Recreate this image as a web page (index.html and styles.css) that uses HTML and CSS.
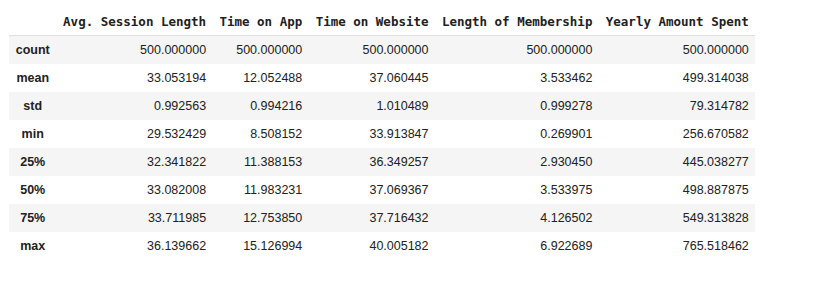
FILE: index.html
```html
<!DOCTYPE html>
<html lang="en">
<head>
    <meta charset="UTF-8">
    <title>describe()</title>
    <link rel="stylesheet" href="styles.css">
</head>
<body>
    <table class="dataframe">
        <thead>
            <tr>
                <th></th>
                <th>Avg. Session Length</th>
                <th>Time on App</th>
                <th>Time on Website</th>
                <th>Length of Membership</th>
                <th>Yearly Amount Spent</th>
            </tr>
        </thead>
        <tbody>
            <tr>
                <th>count</th>
                <td>500.000000</td>
                <td>500.000000</td>
                <td>500.000000</td>
                <td>500.000000</td>
                <td>500.000000</td>
            </tr>
            <tr>
                <th>mean</th>
                <td>33.053194</td>
                <td>12.052488</td>
                <td>37.060445</td>
                <td>3.533462</td>
                <td>499.314038</td>
            </tr>
            <tr>
                <th>std</th>
                <td>0.992563</td>
                <td>0.994216</td>
                <td>1.010489</td>
                <td>0.999278</td>
                <td>79.314782</td>
            </tr>
            <tr>
                <th>min</th>
                <td>29.532429</td>
                <td>8.508152</td>
                <td>33.913847</td>
                <td>0.269901</td>
                <td>256.670582</td>
            </tr>
            <tr>
                <th>25%</th>
                <td>32.341822</td>
                <td>11.388153</td>
                <td>36.349257</td>
                <td>2.930450</td>
                <td>445.038277</td>
            </tr>
            <tr>
                <th>50%</th>
                <td>33.082008</td>
                <td>11.983231</td>
                <td>37.069367</td>
                <td>3.533975</td>
                <td>498.887875</td>
            </tr>
            <tr>
                <th>75%</th>
                <td>33.711985</td>
                <td>12.753850</td>
                <td>37.716432</td>
                <td>4.126502</td>
                <td>549.313828</td>
            </tr>
            <tr>
                <th>max</th>
                <td>36.139662</td>
                <td>15.126994</td>
                <td>40.005182</td>
                <td>6.922689</td>
                <td>765.518462</td>
            </tr>
        </tbody>
    </table>
</body>
</html>
```

FILE: styles.css
```css
/* Page */
body {
    margin: 8px;
    background: white;
    color: #212121;
    font-family: 'Liberation Sans', Arial, sans-serif;
    font-size: 12.5px;
}

/* DataFrame table */
.dataframe {
    border-collapse: collapse;
    border-spacing: 0;
    margin-left: 1px;
}

.dataframe th,
.dataframe td {
    padding: 6px 6.7px;
    line-height: 16px;
    text-align: right;
    vertical-align: middle;
    white-space: nowrap;
}

/* Column headers */
.dataframe thead th {
    padding-top: 5.5px;
    padding-bottom: 5.5px;
    font-family: 'DejaVu Sans Mono', monospace;
    font-weight: bold;
    color: #212121;
    border-bottom: 1px solid #e0e0e0;
}

/* Row labels */
.dataframe tbody th {
    text-align: center;
    font-weight: bold;
}

.dataframe tbody tr:nth-child(odd) {
    background-color: #f5f5f5;
}
```
